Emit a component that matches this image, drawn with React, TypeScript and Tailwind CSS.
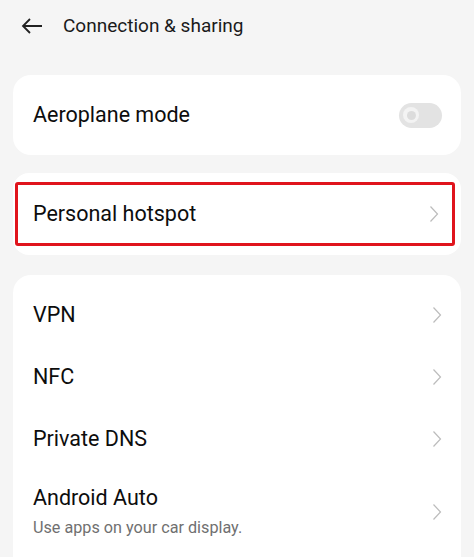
const rows = [
  { title: "VPN" },
  { title: "NFC" },
  { title: "Private DNS" },
  { title: "Android Auto", sub: "Use apps on your car display." },
];

function Chevron() {
  return (
    <svg width="10" height="18" viewBox="0 0 10 18" className="shrink-0">
      <path d="M1.5 1.5 L8.5 9 L1.5 16.5" fill="none" stroke="#bcbcbc" strokeWidth="1.2" />
    </svg>
  );
}

export default function App() {
  return (
    <div
      className="h-[557px] w-[474px] overflow-hidden bg-[#f5f5f5] text-[#0d0d0d]"
      style={{ fontFamily: "Roboto, 'Noto Sans', sans-serif" }}
    >
      {/* header */}
      <div className="flex h-[52px] items-center pl-[21px]">
        <svg width="22" height="16" viewBox="0 0 22 16">
          <path d="M21 8 H2 M9 1 L2 8 L9 15" fill="none" stroke="#222" strokeWidth="1.8" />
        </svg>
        <span className="ml-[20px] text-[19px] text-[#1a1a1a]">Connection &amp; sharing</span>
      </div>

      <div className="flex flex-col px-[13px] pt-[23px]">
        {/* aeroplane */}
        <div className="flex h-[80px] items-center justify-between rounded-[18px] bg-white pl-[20px] pr-[19px]">
          <span className="text-[21.5px]">Aeroplane mode</span>
          <div className="flex h-[25px] w-[43px] items-center rounded-full bg-[#e3e3e3] pl-[4px]">
            <div className="flex h-[16px] w-[16px] items-center justify-center rounded-full bg-[#f3f3f3]">
              <div className="h-[9px] w-[9px] rounded-full bg-[#dcdcdc]" />
            </div>
          </div>
        </div>

        {/* hotspot */}
        <div className="mt-[18px] flex h-[82px] items-center rounded-[16px] bg-white">
          <div className="ml-[2px] mr-[6px] flex h-[64px] flex-1 items-center justify-between rounded-[3px] border-[3px] border-[#e0141c] pl-[15px] pr-[13px]">
            <span className="text-[21.5px]">Personal hotspot</span>
            <Chevron />
          </div>
        </div>

        {/* list */}
        <div className="mt-[20px] flex flex-col rounded-t-[18px] bg-white pt-[9px] pb-[20px]">
          {rows.map((r) => (
            <div
              key={r.title}
              className={
                r.sub
                  ? "flex items-center justify-between py-[14px] pl-[20px] pr-[19px]"
                  : "flex h-[62px] items-center justify-between pl-[20px] pr-[19px]"
              }
            >
              <div className="flex flex-col">
                <span className="text-[21.5px] leading-[28px]">{r.title}</span>
                {r.sub && (
                  <span className="mt-[5px] text-[16.2px] leading-[22px] text-[#707070]">{r.sub}</span>
                )}
              </div>
              <Chevron />
            </div>
          ))}
        </div>
      </div>
    </div>
  );
}
